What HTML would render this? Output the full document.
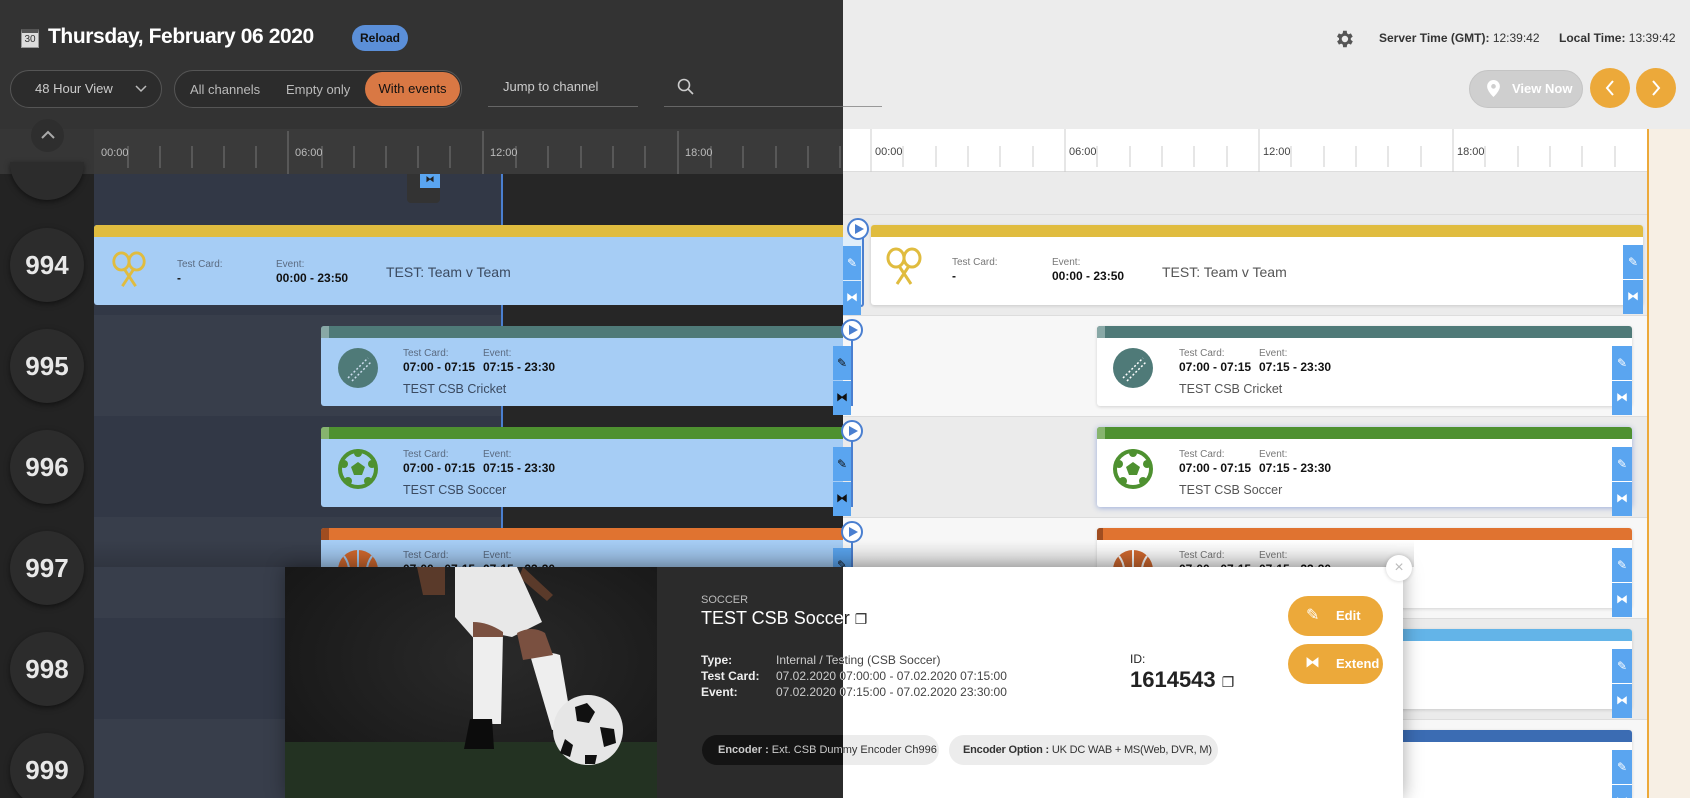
<!DOCTYPE html>
<html><head><meta charset="utf-8">
<style>
*{margin:0;padding:0;box-sizing:border-box}
html,body{width:1690px;height:798px;overflow:hidden}
body{font-family:"Liberation Sans",sans-serif;background:#ececec}
#w{position:relative;width:1690px;height:798px;overflow:hidden}
.a{position:absolute}
.lbl{font-size:10px;color:#5a6a80}
.val{font-size:12px;font-weight:bold;color:#111}
.ttl{font-size:12.5px;color:#3b4a60}
.rl .lbl{color:#777}.rl .ttl{color:#555}
.sb{position:absolute;width:20px;height:34px;background:#5aa5f0;color:#fff;font-size:12px;text-align:center;line-height:34px}
.play{position:absolute;width:22px;height:22px;border-radius:50%;border:2px solid #4a7fd0;background:#fff}
.play:after{content:"";position:absolute;left:6px;top:4px;border-left:9px solid #4a7fd0;border-top:5px solid transparent;border-bottom:5px solid transparent}
.ch{position:absolute;left:10px;width:74px;height:74px;border-radius:50%;background:#2c2c2c;box-shadow:0 2px 6px rgba(0,0,0,.5);color:#e8e8e8;font-weight:bold;font-size:26px;text-align:center;line-height:74px}
</style></head><body><div id="w">

<!-- RIGHT (light) background -->
<div class="a" style="left:843px;top:0;width:847px;height:129px;background:#ececec"></div>
<div class="a" style="left:843px;top:129px;width:805px;height:43px;background:#fff;border-bottom:1px solid #ddd"></div>
<div class="a" style="left:1648px;top:129px;width:42px;height:669px;background:#f7efe4"></div>
<div class="a" style="left:843px;top:172px;width:805px;height:42px;background:#ebebeb"></div>
<div class="a" style="left:843px;top:214px;width:805px;height:101px;background:#ebebeb;border-top:1px solid #ddd"></div>
<div class="a" style="left:843px;top:315px;width:805px;height:101px;background:#f7f7f7;border-top:1px solid #ddd"></div>
<div class="a" style="left:843px;top:416px;width:805px;height:101px;background:#ebebeb;border-top:1px solid #ddd"></div>
<div class="a" style="left:843px;top:517px;width:805px;height:101px;background:#f7f7f7;border-top:1px solid #ddd"></div>
<div class="a" style="left:843px;top:618px;width:805px;height:101px;background:#ebebeb;border-top:1px solid #ddd"></div>
<div class="a" style="left:843px;top:719px;width:805px;height:79px;background:#f7f7f7;border-top:1px solid #ddd"></div>
<div class="a" style="left:1647px;top:129px;width:2px;height:669px;background:#eca93a"></div>

<!-- right timeline -->
<svg class="a" style="left:843px;top:129px" width="805" height="44">
<g stroke="#ccc" stroke-width="1">
<line x1="28" y1="0" x2="28" y2="43"/><line x1="222" y1="0" x2="222" y2="43"/><line x1="416" y1="0" x2="416" y2="43"/><line x1="610" y1="0" x2="610" y2="43"/>
<line x1="60" y1="17" x2="60" y2="38"/><line x1="93" y1="17" x2="93" y2="38"/><line x1="125" y1="17" x2="125" y2="38"/><line x1="157" y1="17" x2="157" y2="38"/><line x1="190" y1="17" x2="190" y2="38"/>
<line x1="254" y1="17" x2="254" y2="38"/><line x1="287" y1="17" x2="287" y2="38"/><line x1="319" y1="17" x2="319" y2="38"/><line x1="351" y1="17" x2="351" y2="38"/><line x1="384" y1="17" x2="384" y2="38"/>
<line x1="448" y1="17" x2="448" y2="38"/><line x1="481" y1="17" x2="481" y2="38"/><line x1="513" y1="17" x2="513" y2="38"/><line x1="545" y1="17" x2="545" y2="38"/><line x1="578" y1="17" x2="578" y2="38"/>
<line x1="642" y1="17" x2="642" y2="38"/><line x1="675" y1="17" x2="675" y2="38"/><line x1="707" y1="17" x2="707" y2="38"/><line x1="739" y1="17" x2="739" y2="38"/><line x1="772" y1="17" x2="772" y2="38"/>
</g>
<g font-size="11" fill="#444" font-family="Liberation Sans"><text x="32" y="26">00:00</text><text x="226" y="26">06:00</text><text x="420" y="26">12:00</text><text x="614" y="26">18:00</text></g>
</svg>

<!-- right header -->
<svg class="a" style="left:1333px;top:28px" width="22" height="22" viewBox="0 0 24 24"><path fill="#555" d="M19.4 13a7.5 7.5 0 0 0 0-2l2.1-1.6-2-3.5-2.5 1a7 7 0 0 0-1.7-1L15 3h-4l-.4 2.9a7 7 0 0 0-1.7 1l-2.5-1-2 3.5L6.6 11a7.5 7.5 0 0 0 0 2l-2.1 1.6 2 3.5 2.5-1a7 7 0 0 0 1.7 1L11 21h4l.4-2.9a7 7 0 0 0 1.7-1l2.5 1 2-3.5zM13 15.5a3.5 3.5 0 1 1 0-7 3.5 3.5 0 0 1 0 7z"/></svg>
<div class="a" style="left:1379px;top:31px;font-size:12px;color:#333"><b>Server Time (GMT):</b> 12:39:42</div>
<div class="a" style="left:1559px;top:31px;font-size:12px;color:#333"><b>Local Time:</b> 13:39:42</div>
<div class="a" style="left:1469px;top:70px;width:114px;height:38px;border-radius:19px;background:#cfcfcf;border:1px solid #c4c4c4;color:#fff;font-weight:bold;font-size:13px;line-height:36px;padding-left:42px">View Now</div>
<svg class="a" style="left:1487px;top:80px" width="13" height="17" viewBox="0 0 12 16"><path fill="#fff" d="M6 0a6 6 0 0 0-6 6c0 4.5 6 10 6 10s6-5.5 6-10a6 6 0 0 0-6-6zm0 8.2A2.2 2.2 0 1 1 6 3.8a2.2 2.2 0 0 1 0 4.4z"/></svg>
<div class="a" style="left:1590px;top:68px;width:40px;height:40px;border-radius:50%;background:#eca93a"></div>
<div class="a" style="left:1636px;top:68px;width:40px;height:40px;border-radius:50%;background:#eca93a"></div>
<svg class="a" style="left:1590px;top:68px" width="86" height="40"><path d="M23 13l-6 7 6 7M63 13l6 7-6 7" stroke="#fff" stroke-width="2" fill="none"/></svg>

<!-- right cards -->
<div class="a rl" style="left:871px;top:225px;width:772px;height:80px;background:#fff;border-radius:3px;box-shadow:0 1px 3px rgba(0,0,0,.15);overflow:hidden">
 <div style="height:12px;background:#e0bc3f"></div>
 <div class="a lbl" style="left:81px;top:32px">Test Card:</div><div class="a val" style="left:81px;top:44px">-</div>
 <div class="a lbl" style="left:181px;top:32px">Event:</div><div class="a val" style="left:181px;top:44px">00:00 - 23:50</div>
 <div class="a ttl" style="left:291px;top:39px;font-size:14px">TEST: Team v Team</div>
</div>
<div class="a rl" style="left:1097px;top:326px;width:535px;height:80px;background:#fff;border-radius:3px;box-shadow:0 1px 3px rgba(0,0,0,.15);overflow:hidden">
 <div style="height:12px;background:#4f7a78"><div style="width:8px;height:12px;background:#88a8a6"></div></div>
 <div class="a lbl" style="left:82px;top:22px">Test Card:</div><div class="a val" style="left:82px;top:34px">07:00 - 07:15</div>
 <div class="a lbl" style="left:162px;top:22px">Event:</div><div class="a val" style="left:162px;top:34px">07:15 - 23:30</div>
 <div class="a ttl" style="left:82px;top:56px">TEST CSB Cricket</div>
</div>
<div class="a rl" style="left:1097px;top:427px;width:535px;height:80px;background:#fff;border-radius:3px;box-shadow:0 1px 6px rgba(60,100,200,.45);overflow:hidden">
 <div style="height:12px;background:#4e9130"><div style="width:8px;height:12px;background:#86b46e"></div></div>
 <div class="a lbl" style="left:82px;top:22px">Test Card:</div><div class="a val" style="left:82px;top:34px">07:00 - 07:15</div>
 <div class="a lbl" style="left:162px;top:22px">Event:</div><div class="a val" style="left:162px;top:34px">07:15 - 23:30</div>
 <div class="a ttl" style="left:82px;top:56px">TEST CSB Soccer</div>
</div>
<div class="a rl" style="left:1097px;top:528px;width:535px;height:80px;background:#fff;border-radius:3px;box-shadow:0 1px 3px rgba(0,0,0,.15);overflow:hidden">
 <div style="height:12px;background:#e07330"><div style="width:6px;height:12px;background:#a04d20"></div></div>
 <div class="a lbl" style="left:82px;top:22px">Test Card:</div><div class="a val" style="left:82px;top:34px">07:00 - 07:15</div>
 <div class="a lbl" style="left:162px;top:22px">Event:</div><div class="a val" style="left:162px;top:34px">07:15 - 23:30</div>
</div>
<div class="a" style="left:1097px;top:629px;width:535px;height:80px;background:#fff;border-radius:3px;box-shadow:0 1px 3px rgba(0,0,0,.15);overflow:hidden"><div style="height:12px;background:#63b4e8"></div></div>
<div class="a" style="left:1097px;top:730px;width:535px;height:68px;background:#fff;border-radius:3px 3px 0 0;box-shadow:0 1px 3px rgba(0,0,0,.15);overflow:hidden"><div style="height:12px;background:#3b6cb3"></div></div>
<div class="sb" style="left:1623px;top:245px">✎</div><div class="sb" style="left:1623px;top:280px;line-height:32px">⧓</div>
<div class="sb" style="left:1612px;top:346px">✎</div><div class="sb" style="left:1612px;top:381px;line-height:32px">⧓</div>
<div class="sb" style="left:1612px;top:447px">✎</div><div class="sb" style="left:1612px;top:482px;line-height:32px">⧓</div>
<div class="sb" style="left:1612px;top:548px">✎</div><div class="sb" style="left:1612px;top:583px;line-height:32px">⧓</div>
<div class="sb" style="left:1612px;top:649px">✎</div><div class="sb" style="left:1612px;top:684px;line-height:32px">⧓</div>
<div class="sb" style="left:1612px;top:750px">✎</div><div class="sb" style="left:1612px;top:785px;line-height:32px;height:13px">⧓</div>

<svg class="a" style="left:884px;top:247px" width="40" height="40" viewBox="0 0 40 40"><g fill="none" stroke="#e0bc3f" stroke-width="3"><ellipse cx="12" cy="11" rx="8" ry="9"/><ellipse cx="28" cy="11" rx="8" ry="9"/><path d="M15 19l12 18M25 19L13 37"/></g></svg>
<svg class="a" style="left:1113px;top:348px" width="40" height="40" viewBox="0 0 40 40"><circle cx="20" cy="20" r="20" fill="#4f7a78"/><path d="M10 30L30 10M14 33L33 14" stroke="#fff" stroke-width="1.5" stroke-dasharray="2 2"/></svg>
<svg class="a" style="left:1113px;top:449px" width="40" height="40" viewBox="0 0 40 40"><circle cx="20" cy="20" r="18" fill="#fff" stroke="#4e9130" stroke-width="4"/><path fill="#4e9130" d="M20 13l7 5-3 8h-8l-3-8z"/><circle cx="20" cy="4" r="4" fill="#4e9130"/><circle cx="6" cy="15" r="4" fill="#4e9130"/><circle cx="34" cy="15" r="4" fill="#4e9130"/><circle cx="10" cy="32" r="4" fill="#4e9130"/><circle cx="30" cy="32" r="4" fill="#4e9130"/></svg>
<svg class="a" style="left:1113px;top:550px" width="40" height="40" viewBox="0 0 40 40"><circle cx="20" cy="20" r="20" fill="#d2692f"/><path d="M20 0v40M0 20h40M6 6q10 14 0 28M34 6q-10 14 0 28" stroke="#fff" stroke-width="2" fill="none"/></svg>

<!-- LEFT (dark) -->
<div class="a" style="left:0;top:0;width:843px;height:129px;background:#333"></div>
<div class="a" style="left:0;top:129px;width:843px;height:45px;background:#3a3a3a"></div>
<div class="a" style="left:0;top:129px;width:94px;height:45px;background:#363636"></div>
<div class="a" style="left:0;top:174px;width:94px;height:624px;background:#232323"></div>
<div class="a" style="left:94px;top:174px;width:408px;height:624px;background:#323846"></div>
<div class="a" style="left:94px;top:315px;width:408px;height:101px;background:#383e4b"></div>
<div class="a" style="left:94px;top:517px;width:408px;height:101px;background:#383e4b"></div>
<div class="a" style="left:94px;top:719px;width:408px;height:79px;background:#383e4b"></div>
<div class="a" style="left:502px;top:174px;width:341px;height:624px;background:#262626"></div>
<div class="a" style="left:501px;top:174px;width:2px;height:624px;background:#4a7fd0"></div>

<svg class="a" style="left:94px;top:129px" width="749" height="45">
<g stroke="#777" stroke-width="1">
<line x1="194" y1="2" x2="194" y2="45"/><line x1="389" y1="2" x2="389" y2="45"/><line x1="584" y1="2" x2="584" y2="45"/>
<line x1="34" y1="17" x2="34" y2="39"/><line x1="66" y1="17" x2="66" y2="39"/><line x1="98" y1="17" x2="98" y2="39"/><line x1="130" y1="17" x2="130" y2="39"/><line x1="162" y1="17" x2="162" y2="39"/>
<line x1="228" y1="17" x2="228" y2="39"/><line x1="260" y1="17" x2="260" y2="39"/><line x1="292" y1="17" x2="292" y2="39"/><line x1="324" y1="17" x2="324" y2="39"/><line x1="356" y1="17" x2="356" y2="39"/>
<line x1="422" y1="17" x2="422" y2="39"/><line x1="454" y1="17" x2="454" y2="39"/><line x1="487" y1="17" x2="487" y2="39"/><line x1="519" y1="17" x2="519" y2="39"/><line x1="551" y1="17" x2="551" y2="39"/>
<line x1="617" y1="17" x2="617" y2="39"/><line x1="649" y1="17" x2="649" y2="39"/><line x1="682" y1="17" x2="682" y2="39"/><line x1="714" y1="17" x2="714" y2="39"/><line x1="746" y1="17" x2="746" y2="39"/>
</g>
<g font-size="11" fill="#bbb" font-family="Liberation Sans"><text x="7" y="27">00:00</text><text x="201" y="27">06:00</text><text x="396" y="27">12:00</text><text x="591" y="27">18:00</text></g>
</svg>
<div class="a" style="left:31px;top:119px;width:33px;height:33px;border-radius:50%;background:#2e2e2e"></div>
<svg class="a" style="left:38px;top:126px" width="20" height="18"><path d="M4 12l6-6 6 6" stroke="#aaa" stroke-width="2" fill="none"/></svg>
<div class="a" style="left:407px;top:174px;width:33px;height:29px;background:#333;border-radius:0 0 4px 4px"></div>
<div class="a" style="left:420px;top:174px;width:20px;height:14px;background:#5aa5f0;font-size:9px;text-align:center;color:#222">⧓</div>

<!-- header left -->
<div class="a" style="left:21px;top:29px;width:18px;height:19px;background:#ddd;border:1px solid #999;border-top:4px solid #555;font-size:10px;text-align:center;line-height:14px;color:#333">30</div>
<div class="a" style="left:48px;top:25px;font-size:21px;font-weight:bold;color:#fff;letter-spacing:-0.4px">Thursday, February 06 2020</div>
<div class="a" style="left:352px;top:25px;width:56px;height:26px;border-radius:13px;background:#5b8fd8;color:#111;font-weight:bold;font-size:12px;text-align:center;line-height:26px">Reload</div>
<div class="a" style="left:10px;top:70px;width:152px;height:38px;border-radius:19px;border:1px solid #555;background:#2c2c2c;color:#ccc;font-size:13px;line-height:36px;padding-left:24px">48 Hour View</div>
<svg class="a" style="left:134px;top:84px" width="14" height="10"><path d="M2 2l5 5 5-5" stroke="#bbb" stroke-width="1.5" fill="none"/></svg>
<div class="a" style="left:174px;top:70px;width:288px;height:38px;border-radius:19px;border:1px solid #555;background:#2c2c2c"></div>
<div class="a" style="left:190px;top:82px;color:#bbb;font-size:13px">All channels</div>
<div class="a" style="left:286px;top:82px;color:#bbb;font-size:13px">Empty only</div>
<div class="a" style="left:365px;top:72px;width:95px;height:34px;border-radius:17px;background:#d97844;color:#111;font-size:13px;text-align:center;line-height:34px">With events</div>
<div class="a" style="left:503px;top:79px;color:#ccc;font-size:13px">Jump to channel</div>
<div class="a" style="left:488px;top:106px;width:150px;height:1px;background:#666"></div>
<div class="a" style="left:664px;top:106px;width:179px;height:1px;background:#666"></div>
<div class="a" style="left:843px;top:106px;width:39px;height:1px;background:#999"></div>
<svg class="a" style="left:677px;top:78px" width="18" height="18"><circle cx="7" cy="7" r="5.5" stroke="#ccc" stroke-width="1.6" fill="none"/><path d="M11 11l5 5" stroke="#ccc" stroke-width="1.6"/></svg>

<!-- channel badges -->
<div class="ch" style="top:162px;height:38px;border-radius:0 0 37px 37px"></div>
<div class="ch" style="top:228px">994</div>
<div class="ch" style="top:329px">995</div>
<div class="ch" style="top:430px">996</div>
<div class="ch" style="top:531px">997</div>
<div class="ch" style="top:632px">998</div>
<div class="ch" style="top:733px">999</div>

<!-- left cards -->
<div class="a" style="left:94px;top:225px;width:749px;height:80px;background:#a6cdf5;border-radius:3px 0 0 3px;overflow:hidden">
 <div style="height:12px;background:#e0bc3f"></div>
 <div class="a lbl" style="left:83px;top:34px">Test Card:</div><div class="a val" style="left:83px;top:46px">-</div>
 <div class="a lbl" style="left:182px;top:34px">Event:</div><div class="a val" style="left:182px;top:46px">00:00 - 23:50</div>
 <div class="a ttl" style="left:292px;top:39px;font-size:14px">TEST: Team v Team</div>
</div>
<div class="a" style="left:321px;top:326px;width:522px;height:80px;background:#a6cdf5;border-radius:3px 0 0 3px;overflow:hidden">
 <div style="height:12px;background:#4f7a78"><div style="width:8px;height:12px;background:#88a8a6"></div></div>
 <div class="a lbl" style="left:82px;top:22px">Test Card:</div><div class="a val" style="left:82px;top:34px">07:00 - 07:15</div>
 <div class="a lbl" style="left:162px;top:22px">Event:</div><div class="a val" style="left:162px;top:34px">07:15 - 23:30</div>
 <div class="a ttl" style="left:82px;top:56px">TEST CSB Cricket</div>
</div>
<div class="a" style="left:321px;top:427px;width:522px;height:80px;background:#a6cdf5;border-radius:3px 0 0 3px;overflow:hidden">
 <div style="height:12px;background:#4e9130"><div style="width:8px;height:12px;background:#86b46e"></div></div>
 <div class="a lbl" style="left:82px;top:22px">Test Card:</div><div class="a val" style="left:82px;top:34px">07:00 - 07:15</div>
 <div class="a lbl" style="left:162px;top:22px">Event:</div><div class="a val" style="left:162px;top:34px">07:15 - 23:30</div>
 <div class="a ttl" style="left:82px;top:56px">TEST CSB Soccer</div>
</div>
<div class="a" style="left:321px;top:528px;width:522px;height:80px;background:#a6cdf5;border-radius:3px 0 0 3px;overflow:hidden">
 <div style="height:12px;background:#e07330"><div style="width:8px;height:12px;background:#a04d20"></div></div>
 <div class="a lbl" style="left:82px;top:22px">Test Card:</div><div class="a val" style="left:82px;top:34px">07:00 - 07:15</div>
 <div class="a lbl" style="left:162px;top:22px">Event:</div><div class="a val" style="left:162px;top:34px">07:15 - 23:30</div>
</div>
<svg class="a" style="left:110px;top:251px" width="38" height="38" viewBox="0 0 40 40"><g fill="none" stroke="#e0bc3f" stroke-width="3"><ellipse cx="12" cy="11" rx="8" ry="9"/><ellipse cx="28" cy="11" rx="8" ry="9"/><path d="M15 19l12 18M25 19L13 37"/></g></svg>
<svg class="a" style="left:338px;top:348px" width="40" height="40" viewBox="0 0 40 40"><circle cx="20" cy="20" r="20" fill="#4f7a78"/><path d="M10 30L30 10M14 33L33 14" stroke="#cde" stroke-width="1.5" stroke-dasharray="2 2"/></svg>
<svg class="a" style="left:338px;top:449px" width="40" height="40" viewBox="0 0 40 40"><circle cx="20" cy="20" r="18" fill="#a6cdf5" stroke="#4e9130" stroke-width="4"/><path fill="#4e9130" d="M20 13l7 5-3 8h-8l-3-8z"/><circle cx="20" cy="4" r="4" fill="#4e9130"/><circle cx="6" cy="15" r="4" fill="#4e9130"/><circle cx="34" cy="15" r="4" fill="#4e9130"/><circle cx="10" cy="32" r="4" fill="#4e9130"/><circle cx="30" cy="32" r="4" fill="#4e9130"/></svg>
<svg class="a" style="left:338px;top:550px" width="40" height="40" viewBox="0 0 40 40"><circle cx="20" cy="20" r="20" fill="#d2692f"/><path d="M20 0v40M0 20h40M6 6q10 14 0 28M34 6q-10 14 0 28" stroke="#a6cdf5" stroke-width="2" fill="none"/></svg>
<div class="a" style="left:843px;top:237px;width:21px;height:70px;background:#e0eefa;border:2px solid #4a7fd0;border-left:none;border-top:none;border-radius:0 0 3px 0"></div>
<div class="sb" style="left:843px;top:246px;width:18px">✎</div><div class="sb" style="left:843px;top:281px;width:18px;line-height:32px">⧓</div>
<div class="a" style="left:851px;top:338px;width:2px;height:68px;background:#4a7fd0"></div>
<div class="a" style="left:851px;top:439px;width:2px;height:68px;background:#4a7fd0"></div>
<div class="a" style="left:851px;top:540px;width:2px;height:30px;background:#4a7fd0"></div>
<div class="sb" style="left:833px;top:346px;width:18px;color:#111">✎</div><div class="sb" style="left:833px;top:381px;width:18px;color:#111;line-height:32px">⧓</div>
<div class="sb" style="left:833px;top:447px;width:18px;color:#111">✎</div><div class="sb" style="left:833px;top:482px;width:18px;color:#111;line-height:32px">⧓</div>
<div class="sb" style="left:833px;top:548px;width:18px;color:#111">✎</div>
<div class="play" style="left:847px;top:218px"></div>
<div class="play" style="left:841px;top:319px"></div>
<div class="play" style="left:841px;top:420px"></div>
<div class="play" style="left:841px;top:521px"></div>

<div class="a" style="left:94px;top:540px;width:1320px;height:27px;background:linear-gradient(rgba(0,0,0,0),rgba(0,0,0,.15))"></div>

<!-- POPUP light -->
<div class="a" style="left:285px;top:567px;width:1118px;height:231px;background:#fff;box-shadow:0 0 18px rgba(0,0,0,.35)"></div>
<div class="a" style="left:701px;top:594px;font-size:11px;color:#555">SOCCER</div>
<div class="a" style="left:701px;top:608px;font-size:18px;color:#222">TEST CSB Soccer <span style="font-size:14px">❐</span></div>
<div class="a" style="left:701px;top:652px;font-size:12px;line-height:16px;color:#222;font-weight:bold">Type:<br>Test Card:<br>Event:</div>
<div class="a" style="left:776px;top:652px;font-size:12px;line-height:16px;color:#444;white-space:nowrap">Internal / Testing (CSB Soccer)<br>07.02.2020 07:00:00 - 07.02.2020 07:15:00<br>07.02.2020 07:15:00 - 07.02.2020 23:30:00</div>
<div class="a" style="left:1130px;top:652px;font-size:12px;color:#222">ID:</div>
<div class="a" style="left:1130px;top:667px;font-size:22px;font-weight:bold;color:#222">1614543 <span style="font-size:14px;font-weight:normal">❐</span></div>
<div class="a" style="left:702px;top:735px;width:237px;height:30px;border-radius:15px;background:#ececec;font-size:11px;color:#333;line-height:30px;padding-left:16px;white-space:nowrap"><b>Encoder :</b> Ext. CSB Dummy Encoder Ch996</div>
<div class="a" style="left:949px;top:735px;width:269px;height:30px;border-radius:15px;background:#ececec;font-size:11px;color:#333;line-height:30px;padding-left:14px;white-space:nowrap;letter-spacing:-0.2px"><b>Encoder Option :</b> UK DC WAB + MS(Web, DVR, M)</div>
<div class="a" style="left:1288px;top:596px;width:95px;height:40px;border-radius:20px;background:#eca93a;color:#fff;font-weight:bold;font-size:13px;line-height:40px;padding-left:48px">Edit</div>
<div class="a" style="left:1288px;top:644px;width:95px;height:40px;border-radius:20px;background:#eca93a;color:#fff;font-weight:bold;font-size:13px;line-height:40px;padding-left:48px">Extend</div>
<div class="a" style="left:1306px;top:605px;color:#fff;font-size:16px">✎</div>
<div class="a" style="left:1305px;top:653px;color:#fff;font-size:15px">⧓</div>
<div class="a" style="left:1386px;top:555px;width:26px;height:26px;border-radius:50%;background:#fff;box-shadow:0 0 4px rgba(0,0,0,.2);color:#bbb;font-size:16px;text-align:center;line-height:26px">×</div>

<!-- POPUP dark overlay -->
<div class="a" style="left:656px;top:567px;width:187px;height:231px;background:#2b2b2b;overflow:hidden">
 <div class="a" style="left:45px;top:27px;font-size:11px;color:#bbb;white-space:nowrap">SOCCER</div>
 <div class="a" style="left:45px;top:41px;font-size:18px;color:#fff;white-space:nowrap">TEST CSB Soccer <span style="font-size:14px">❐</span></div>
 <div class="a" style="left:45px;top:85px;font-size:12px;line-height:16px;color:#eee;font-weight:bold">Type:<br>Test Card:<br>Event:</div>
 <div class="a" style="left:120px;top:85px;font-size:12px;line-height:16px;color:#ccc;white-space:nowrap">Internal / Testing (CSB Soccer)<br>07.02.2020 07:00:00 - 07.02.2020 07:15:00<br>07.02.2020 07:15:00 - 07.02.2020 23:30:00</div>
 <div class="a" style="left:46px;top:168px;width:237px;height:30px;border-radius:15px;background:#141414;font-size:11px;color:#ccc;line-height:30px;padding-left:16px;white-space:nowrap"><b>Encoder :</b> Ext. CSB Dummy Encoder Ch996</div>
</div>

<!-- image -->
<svg class="a" style="left:285px;top:567px" width="372" height="231" viewBox="0 0 372 231">
<defs><radialGradient id="bg" cx="0.55" cy="0.4" r="0.7"><stop offset="0" stop-color="#2a2a2a"/><stop offset="1" stop-color="#161616"/></radialGradient></defs>
<rect width="372" height="231" fill="url(#bg)"/>
<rect y="175" width="372" height="56" fill="#1d2a1c"/>
<rect y="175" width="372" height="56" fill="#2a3a28" opacity=".5"/>
<path d="M132 0h28v28h-22z" fill="#5a3a2a"/>
<path d="M238 0l30 28-6 6-28-24z" fill="#5a3a2a"/>
<path d="M170 0h62l25 55-30 15-25-5-10 10-22-25z" fill="#e8e8e8"/>
<path d="M188 62q12-8 30 5l-2 90h-28z" fill="#eee"/>
<path d="M245 88q15-5 30 0l12 70-20 5z" fill="#eee"/>
<path d="M188 55q15 0 30 10v5h-30z" fill="#7a5040"/>
<path d="M232 66q15-8 28 0l8 22-30 5z" fill="#7a5040"/>
<path d="M185 152h22l2 30h-30z" fill="#0c0c0c"/>
<circle cx="303" cy="163" r="35" fill="#e6e6e6"/>
<path d="M290 140l12-4 8 9-6 11-12-2z M280 172l8 6-3 12-10-4z M315 160l14 2 2 14-12 4z M300 188h12l-2 9h-10z" fill="#111"/>
</svg>

</div></body></html>
